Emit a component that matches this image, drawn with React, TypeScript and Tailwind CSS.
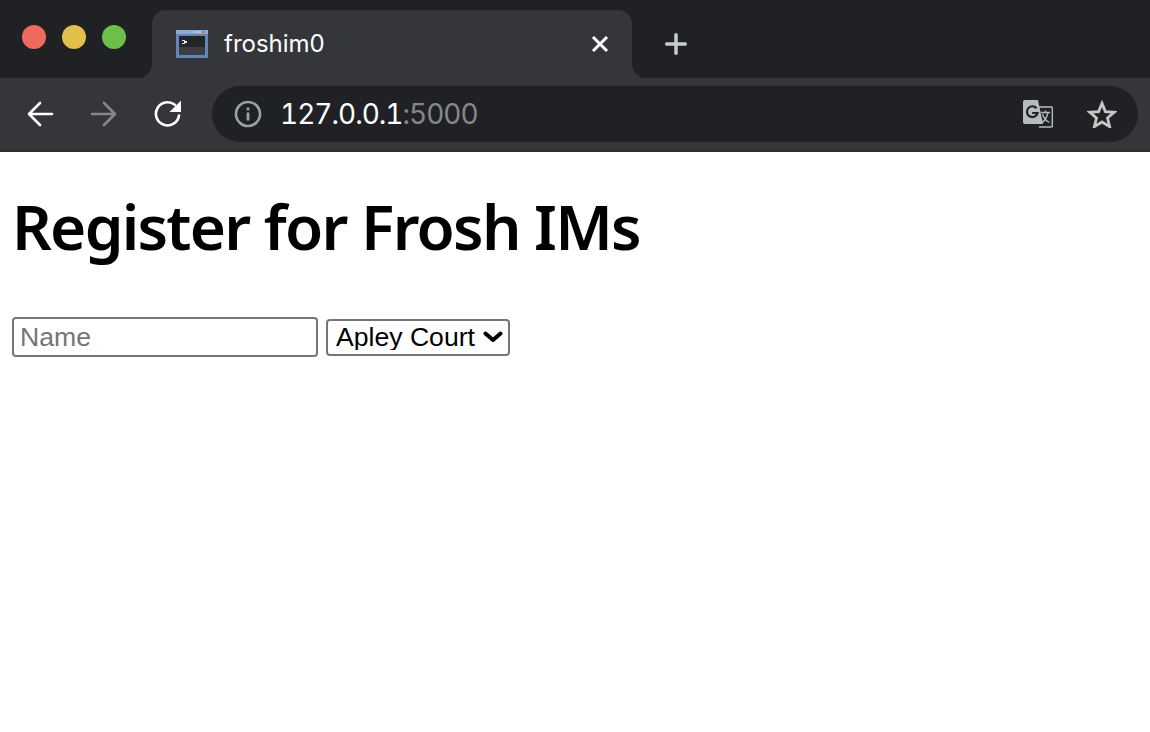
import { Plus } from "lucide-react";

function TrafficLight({ color }: { color: string }) {
  return <span className={`h-6 w-6 rounded-full ${color}`} />;
}

function TabIcon() {
  return (
    <svg width="32" height="28" viewBox="0 0 32 28" className="shrink-0">
      <rect width="32" height="28" fill="#6484bb" />
      <rect y="0" width="32" height="4" fill="#8fa9d8" />
      <rect x="18" y="1" width="3" height="2" fill="#b9c6dc" />
      <rect x="22" y="1" width="3" height="2" fill="#b9c6dc" />
      <rect x="26" y="1" width="3" height="2" fill="#e0694f" />
      <rect x="3" y="6" width="26" height="19" fill="#3c3d3f" />
      <rect x="3" y="6" width="26" height="11" fill="#242527" />
      <path d="M6 10h3v1h2v2H9v1H6v-1h2v-2H6z" fill="#e6e6e6" />
    </svg>
  );
}

function BackIcon({ color, flip }: { color: string; flip?: boolean }) {
  return (
    <svg width="28" height="26" viewBox="0 0 28 26" fill="none" className={flip ? "-scale-x-100" : ""}>
      <path d="M26 13H3M14 2 3 13l11 11" stroke={color} strokeWidth="2.6" strokeLinecap="round" strokeLinejoin="round" />
    </svg>
  );
}

function ReloadIcon() {
  return (
    <svg width="28" height="28" viewBox="0 0 28 28" fill="none">
      <path d="M25 15.5A11.6 11.6 0 1 1 20.8 4.8" stroke="#fff" strokeWidth="2.6" strokeLinecap="round" />
      <path d="M27 0.5v11.5H15.5z" fill="#fff" />
    </svg>
  );
}

function InfoIcon() {
  return (
    <svg width="28" height="28" viewBox="0 0 28 28" fill="none">
      <circle cx="14" cy="14" r="12" stroke="#9aa0a6" strokeWidth="2.6" />
      <rect x="12.6" y="12.5" width="2.8" height="8" fill="#9aa0a6" />
      <rect x="12.6" y="7.5" width="2.8" height="2.8" fill="#9aa0a6" />
    </svg>
  );
}

function TranslateIcon() {
  return (
    <svg width="30" height="28" viewBox="0 0 30 28" fill="none">
      <path d="M14 7h14.5a.8.8 0 0 1 .8.8v18.4a.8.8 0 0 1-.8.8H16" stroke="#b8bbbd" strokeWidth="1.4" />
      <path d="M2 0h13l5 24H2a2 2 0 0 1-2-2V2a2 2 0 0 1 2-2z" fill="#b8bbbd" />
      <path d="M13.5 8.2A5.4 5.4 0 1 0 14.6 13H9.2" stroke="#202124" strokeWidth="2.2" />
      <path d="M18 12.5h9M22.5 10.5v2M25 12.5c-1 5-3.5 8.5-6.5 10.5M19.5 14c1 3.5 3.5 7 7 8.5" stroke="#b8bbbd" strokeWidth="1.3" />
    </svg>
  );
}

function StarIcon() {
  return (
    <svg width="30" height="28" viewBox="0 0 30 28" fill="none">
      <path d="M15 3.4 18.4 11.6 27.2 12.3 20.5 18 22.6 26.6 15 22 7.4 26.6 9.5 18 2.8 12.3 11.6 11.6z" stroke="#c4c7c5" strokeWidth="2.8" strokeLinejoin="miter" />
    </svg>
  );
}

export default function App() {
  return (
    <div className="flex h-[732px] w-[1150px] flex-col overflow-hidden bg-white font-['Liberation_Sans',sans-serif]">
      <header className="shrink-0 bg-[#35363a]">
        <div className="flex h-[78px]">
          <div className="flex h-[78px] w-[152px] gap-4 rounded-br-[14px] bg-[#202124] pl-[22px] pt-[25px]">
            <TrafficLight color="bg-[#ef6a5e]" />
            <TrafficLight color="bg-[#e1bf4b]" />
            <TrafficLight color="bg-[#6cc04a]" />
          </div>
          <div className="h-[78px] w-[480px] bg-[#202124] pt-[10px]">
            <div className="flex h-[68px] items-center rounded-t-[14px] bg-[#35363a] pl-[24px] pr-[22px]">
              <TabIcon />
              <span className="ml-4 flex-1 font-['Inter',sans-serif] text-[24px] leading-none text-white">froshim0</span>
              <svg width="20" height="20" viewBox="0 0 20 20" fill="none" className="mb-[1px]">
                <path d="M3 3l14 14M17 3 3 17" stroke="#fff" strokeWidth="3" />
              </svg>
            </div>
          </div>
          <div className="flex h-[78px] flex-1 rounded-bl-[14px] bg-[#202124] pl-[28px] pt-[28px]">
            <Plus size={32} color="#c7cacf" strokeWidth={2.6} />
          </div>
        </div>
        <div className="flex h-[72px] items-center pb-[1px] pl-[26px] pr-3">
          <BackIcon color="#ffffff" />
          <div className="ml-[36px]">
            <BackIcon color="#85878a" flip />
          </div>
          <div className="ml-[36px]">
            <ReloadIcon />
          </div>
          <div className="ml-[30px] flex h-[56px] flex-1 items-center rounded-full bg-[#202124] pl-[22px] pr-[21px]">
            <InfoIcon />
            <span className="ml-[18px] flex-1 pt-[1px] font-['Inter',sans-serif] text-[28px] leading-none tracking-[-1px] tabular-nums text-white">
              127.0.0.1<span className="text-[#85878a]">:5000</span>
            </span>
            <TranslateIcon />
            <div className="ml-[34px]">
              <StarIcon />
            </div>
          </div>
        </div>
        <div className="h-[2px] bg-[#2c2d30]" />
      </header>
      <main className="px-3 pt-[36px]">
        <h1 className="font-['Noto_Sans',sans-serif] text-[62px] font-semibold leading-[76px] tracking-[-1.75px] text-black [font-stretch:87%]">Register for Frosh IMs</h1>
        <form className="mt-[53px] flex items-center gap-2">
          <input
            placeholder="Name"
            className="h-10 w-[306px] rounded-[4px] border-2 border-[#767676] px-1.5 text-[26.6px] text-black outline-none placeholder:text-[#757575]"
          />
          <div className="relative">
            <select className="h-[37px] w-[184px] appearance-none rounded-[4px] border-2 border-[#767676] bg-white pl-2 text-[26.6px] leading-none text-black outline-none">
              <option>Apley Court</option>
            </select>
            <svg width="20" height="12" viewBox="0 0 20 12" fill="none" className="pointer-events-none absolute right-[7px] top-[12px]">
              <path d="M2.5 2.5 10 9l7.5-6.5" stroke="#000" strokeWidth="4" strokeLinecap="round" strokeLinejoin="round" />
            </svg>
          </div>
        </form>
      </main>
    </div>
  );
}
